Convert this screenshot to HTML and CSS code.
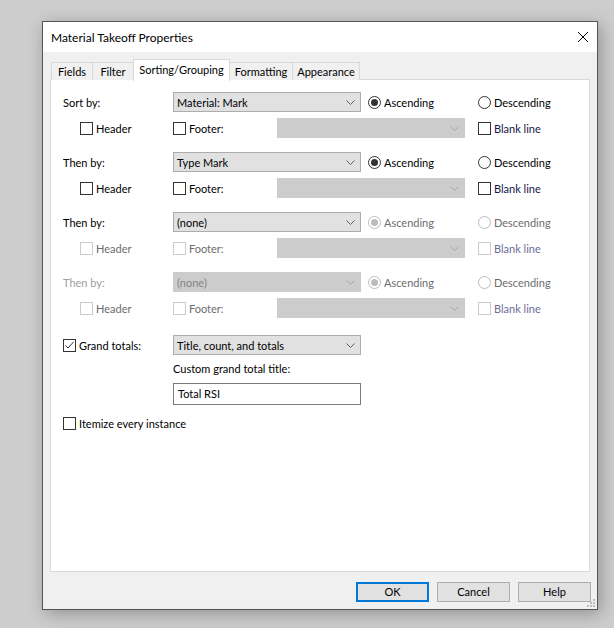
FILE: index.html
```html
<!DOCTYPE html>
<html lang="en">
  <head>
    <meta charset="UTF-8" />
    <title>Material Takeoff Properties</title>
    <link rel="stylesheet" href="styles.css">
  </head>
  <body>
    <div class="dialog">
      <div class="titlebar">
        <span class="title">Material Takeoff Properties</span>
        <svg class="close" width="10" height="10" viewBox="0 0 10 10">
          <path d="M0 0 L10 10 M10 0 L0 10" stroke="#000" stroke-width="1" fill="none"/>
        </svg>
      </div>

      <div class="content">
        <div class="tabs">
          <div class="tab tab-fields">Fields</div>
          <div class="tab tab-filter">Filter</div>
          <div class="tab tab-sorting active">Sorting/Grouping</div>
          <div class="tab tab-formatting">Formatting</div>
          <div class="tab tab-appearance">Appearance</div>
        </div>

        <div class="panel">
          <!-- sort by -->
          <div class="group">
            <div class="row">
              <span class="label">Sort by:</span>
              <div class="select"><span>Material: Mark</span><svg class="chev" width="9" height="5" viewBox="0 0 9 5"><path d="M0.5 0.5 L4.5 4.5 L8.5 0.5" fill="none"/></svg></div>
              <span class="radio first checked"><span class="dot"></span>Ascending</span>
              <span class="radio"><span class="dot"></span>Descending</span>
            </div>
            <div class="row sub">
              <span class="check hdr"><span class="box"></span>Header</span>
              <span class="check ftr"><span class="box"></span>Footer:</span>
              <div class="select off"><span></span><svg class="chev" width="9" height="5" viewBox="0 0 9 5"><path d="M0.5 0.5 L4.5 4.5 L8.5 0.5" fill="none"/></svg></div>
              <span class="check blank"><span class="box"></span>Blank line</span>
            </div>
          </div>

          <div class="group">
            <div class="row">
              <span class="label">Then by:</span>
              <div class="select"><span>Type Mark</span><svg class="chev" width="9" height="5" viewBox="0 0 9 5"><path d="M0.5 0.5 L4.5 4.5 L8.5 0.5" fill="none"/></svg></div>
              <span class="radio first checked"><span class="dot"></span>Ascending</span>
              <span class="radio"><span class="dot"></span>Descending</span>
            </div>
            <div class="row sub">
              <span class="check hdr"><span class="box"></span>Header</span>
              <span class="check ftr"><span class="box"></span>Footer:</span>
              <div class="select off"><span></span><svg class="chev" width="9" height="5" viewBox="0 0 9 5"><path d="M0.5 0.5 L4.5 4.5 L8.5 0.5" fill="none"/></svg></div>
              <span class="check blank"><span class="box"></span>Blank line</span>
            </div>
          </div>

          <div class="group">
            <div class="row">
              <span class="label">Then by:</span>
              <div class="select"><span>(none)</span><svg class="chev" width="9" height="5" viewBox="0 0 9 5"><path d="M0.5 0.5 L4.5 4.5 L8.5 0.5" fill="none"/></svg></div>
              <span class="radio first checked disabled"><span class="dot"></span>Ascending</span>
              <span class="radio disabled"><span class="dot"></span>Descending</span>
            </div>
            <div class="row sub">
              <span class="check hdr disabled"><span class="box"></span>Header</span>
              <span class="check ftr disabled"><span class="box"></span>Footer:</span>
              <div class="select off"><span></span><svg class="chev" width="9" height="5" viewBox="0 0 9 5"><path d="M0.5 0.5 L4.5 4.5 L8.5 0.5" fill="none"/></svg></div>
              <span class="check blank disabled"><span class="box"></span>Blank line</span>
            </div>
          </div>

          <div class="group">
            <div class="row">
              <span class="label disabled">Then by:</span>
              <div class="select off"><span>(none)</span><svg class="chev" width="9" height="5" viewBox="0 0 9 5"><path d="M0.5 0.5 L4.5 4.5 L8.5 0.5" fill="none"/></svg></div>
              <span class="radio first checked disabled"><span class="dot"></span>Ascending</span>
              <span class="radio disabled"><span class="dot"></span>Descending</span>
            </div>
            <div class="row sub">
              <span class="check hdr disabled"><span class="box"></span>Header</span>
              <span class="check ftr disabled"><span class="box"></span>Footer:</span>
              <div class="select off"><span></span><svg class="chev" width="9" height="5" viewBox="0 0 9 5"><path d="M0.5 0.5 L4.5 4.5 L8.5 0.5" fill="none"/></svg></div>
              <span class="check blank disabled"><span class="box"></span>Blank line</span>
            </div>
          </div>

          <!-- grand totals -->
          <div class="row totals">
            <span class="check label ticked"><span class="box"><svg width="11" height="11" viewBox="0 0 11 11"><path d="M1.5 5.5 L4 8 L9.5 2" fill="none" stroke="#333" stroke-width="1"/></svg></span>Grand totals:</span>
            <div class="select"><span>Title, count, and totals</span><svg class="chev" width="9" height="5" viewBox="0 0 9 5"><path d="M0.5 0.5 L4.5 4.5 L8.5 0.5" fill="none"/></svg></div>
          </div>
          <div class="custom">
            <div class="custom-label">Custom grand total title:</div>
            <div class="textbox">Total RSI</div>
          </div>
          <div class="row itemize">
            <span class="check"><span class="box"></span>Itemize every instance</span>
          </div>
        </div>

        <div class="buttons">
          <div class="btn default">OK</div>
          <div class="btn">Cancel</div>
          <div class="btn">Help</div>
        </div>
      </div>

      <svg class="grip" width="8" height="8" viewBox="0 0 8 8">
        <rect x="6" y="0" width="2" height="2" fill="#bcbcbc"/>
        <rect x="3" y="3" width="2" height="2" fill="#bcbcbc"/>
        <rect x="6" y="3" width="2" height="2" fill="#bcbcbc"/>
        <rect x="0" y="6" width="2" height="2" fill="#bcbcbc"/>
        <rect x="3" y="6" width="2" height="2" fill="#bcbcbc"/>
        <rect x="6" y="6" width="2" height="2" fill="#bcbcbc"/>
      </svg>
    </div>
  </body>
</html>
```

FILE: styles.css
```css
body {
  margin: 0;
  padding: 21px 0 0 42px;
  background-color: #cdcdcd;
  font-family: Lato, "Noto Sans", sans-serif;
  font-size: 11px;
  color: #000;
  height: 628px;
  box-sizing: border-box;
  overflow: hidden;
}
.dialog {
  position: relative;
  width: 556px;
  height: 589px;
  box-sizing: border-box;
  border: 1px solid #555;
  background-color: #f0f0f0;
  display: flex;
  flex-direction: column;
  box-shadow: 3px 4px 16px rgba(0, 0, 0, 0.28);
}
.titlebar {
  height: 30px;
  background-color: #fff;
  display: flex;
  align-items: center;
  justify-content: space-between;
  padding: 0 9px 0 8px;
}
.title {
  font-size: 12px;
}
.content {
  flex: 1;
  display: flex;
  flex-direction: column;
  padding: 7px 7px 7px 7px;
}
.tabs {
  display: flex;
  align-items: flex-end;
  height: 21px;
  padding-left: 1px;
  position: relative;
  z-index: 1;
}
.tab {
  height: 18px;
  box-sizing: border-box;
  line-height: 17px;
  text-align: center;
  border: 1px solid #d9d9d9;
  border-bottom: none;
  background-color: #f0f0f0;
  margin-left: -1px;
}
.tab:first-child {
  margin-left: 0;
}
.tab-fields { width: 42px; }
.tab-filter { width: 42px; }
.tab-sorting { width: 97px; }
.tab-formatting { width: 64px; }
.tab-appearance { width: 68px; }
.tab.active {
  height: 22px;
  line-height: 19px;
  margin-bottom: -1px;
  background-color: #fff;
  position: relative;
  z-index: 2;
}
.panel {
  flex: 1;
  margin-top: -1px;
  border: 1px solid #d9d9d9;
  background-color: #fff;
  padding: 12px 12px 0 12px;
}
.group + .group {
  margin-top: 14px;
}
.row {
  display: flex;
  align-items: center;
  height: 20px;
}
.row + .row {
  margin-top: 6px;
}
.label {
  width: 110px;
  flex-shrink: 0;
}
.label.disabled {
  color: #a0a0a0;
}
.select {
  width: 188px;
  height: 20px;
  box-sizing: border-box;
  flex-shrink: 0;
  border: 1px solid #adadad;
  background-color: #e1e1e1;
  display: flex;
  align-items: center;
  justify-content: space-between;
  padding: 0 5px 0 3px;
}
.select .chev path {
  stroke: #606060;
}
.select.off {
  border-color: #cccccc;
  background-color: #cccccc;
  color: #838383;
}
.select.off .chev path {
  stroke: #a6a6a6;
}
.radio {
  display: flex;
  align-items: center;
  gap: 3px;
}
.radio.first {
  margin-left: 7px;
  width: 110px;
}
.dot {
  width: 13px;
  height: 13px;
  box-sizing: border-box;
  border: 1px solid #333;
  border-radius: 50%;
  background-color: #fff;
  display: flex;
  align-items: center;
  justify-content: center;
}
.radio.checked .dot::after {
  content: "";
  width: 7px;
  height: 7px;
  border-radius: 50%;
  background-color: #333;
}
.radio.disabled {
  color: #6d6d6d;
}
.radio.disabled .dot {
  border-color: #bcbcbc;
}
.radio.disabled.checked .dot::after {
  background-color: #bcbcbc;
}
.check {
  display: flex;
  align-items: center;
  gap: 3px;
}
.box {
  width: 13px;
  height: 13px;
  box-sizing: border-box;
  border: 1px solid #333;
  background-color: #fff;
  display: flex;
  align-items: center;
  justify-content: center;
}
.check.disabled {
  color: #6d6d6d;
}
.check.disabled .box {
  border-color: #cccccc;
}
.sub {
  padding-left: 17px;
}
.hdr {
  width: 93px;
  flex-shrink: 0;
}
.ftr {
  width: 104px;
  flex-shrink: 0;
}
.blank {
  margin-left: 13px;
  color: #141446;
}
.blank.disabled {
  color: #6c6c98;
}
.row.totals {
  margin-top: 17px;
}
.custom {
  margin-left: 110px;
}
.custom-label {
  margin-top: 7px;
  line-height: 14px;
}
.textbox {
  margin-top: 7px;
  width: 188px;
  height: 22px;
  box-sizing: border-box;
  border: 1px solid #7a7a7a;
  line-height: 20px;
  padding-left: 4px;
}
.row.itemize {
  margin-top: 8px;
}
.buttons {
  display: flex;
  justify-content: flex-end;
  gap: 8px;
  margin-top: 10px;
  margin-right: -1px;
}
.btn {
  width: 73px;
  height: 20px;
  box-sizing: border-box;
  border: 1px solid #adadad;
  background-color: #e1e1e1;
  text-align: center;
  line-height: 18px;
}
.btn.default {
  border: 2px solid #0078d7;
  line-height: 16px;
}
.grip {
  position: absolute;
  right: 2px;
  bottom: 2px;
}
```
